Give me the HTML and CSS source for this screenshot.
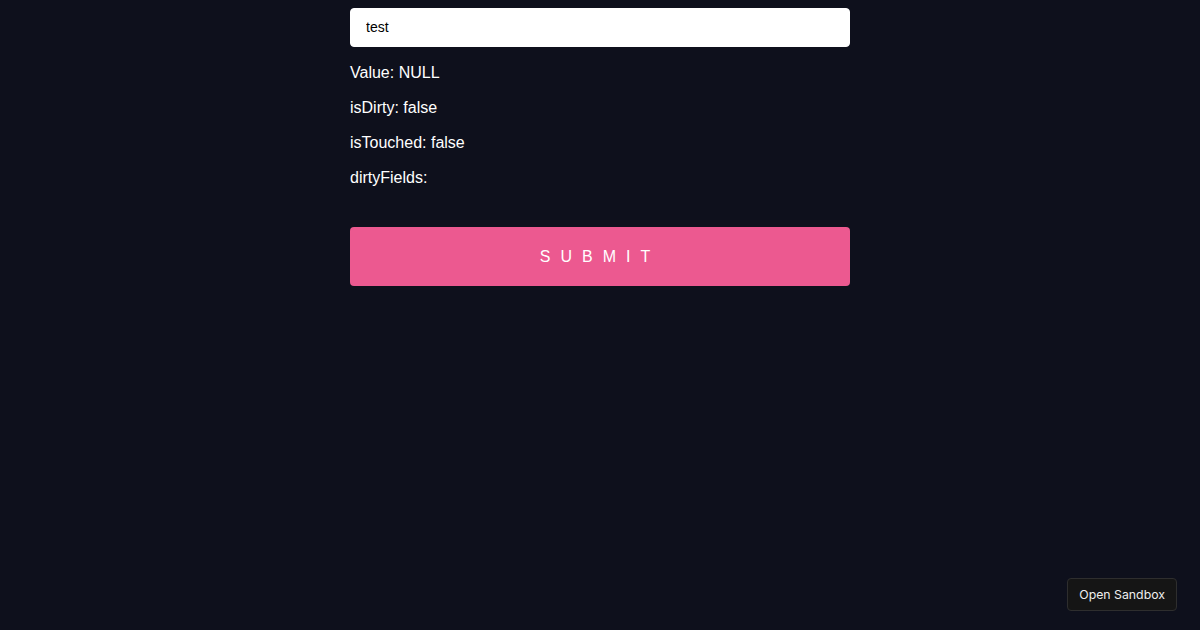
FILE: index.html
```
<!DOCTYPE html>
<html>
<head>
<meta charset="utf-8">
<link rel="stylesheet" href="styles.css">
</head>
<body>
<div class="app">
  <form class="form">
    <input class="field" type="text" value="test">
    <p class="line">Value: NULL</p>
    <p class="line">isDirty: false</p>
    <p class="line">isTouched: false</p>
    <p class="line">dirtyFields: </p>
    <button class="submit" type="button">Submit</button>
  </form>
</div>
<button class="sandbox" type="button">Open Sandbox</button>
</body>
</html>
```
FILE: styles.css
```
html, body {
  margin: 0;
  padding: 0;
  height: 100%;
}
body {
  background: #0e101c;
  color: #ffffff;
  font-family: "Liberation Sans", Arial, sans-serif;
  overflow: hidden;
}
.app {
  width: 500px;
  margin: 0 auto;
  padding-top: 8px;
}
.form {
  margin: 0;
}
.field {
  display: block;
  box-sizing: border-box;
  width: 100%;
  border-radius: 4px;
  border: 1px solid #ffffff;
  background: #ffffff;
  padding: 10px 15px;
  margin: 0 0 10px 0;
  font-size: 14px;
  line-height: 17px;
  font-family: "Liberation Sans", Arial, sans-serif;
  color: #000000;
  outline: none;
}
.line {
  margin: 16px 0;
  font-size: 16px;
  line-height: 19px;
  color: #ffffff;
}
.submit {
  display: block;
  width: 100%;
  box-sizing: border-box;
  background: #ec5990;
  color: #ffffff;
  text-transform: uppercase;
  border: none;
  border-radius: 4px;
  margin-top: 40px;
  padding: 20px;
  font-size: 16px;
  line-height: 19px;
  font-weight: 400;
  letter-spacing: 10px;
  font-family: "Liberation Sans", Arial, sans-serif;
}
.sandbox {
  position: fixed;
  right: 23px;
  bottom: 19px;
  height: 33px;
  padding: 0 11px;
  background: #151515;
  color: #eeeeee;
  border: 1px solid #2e2e2e;
  border-radius: 4px;
  font-size: 12.3px;
  font-family: "Inter", "Liberation Sans", sans-serif;
}
```
